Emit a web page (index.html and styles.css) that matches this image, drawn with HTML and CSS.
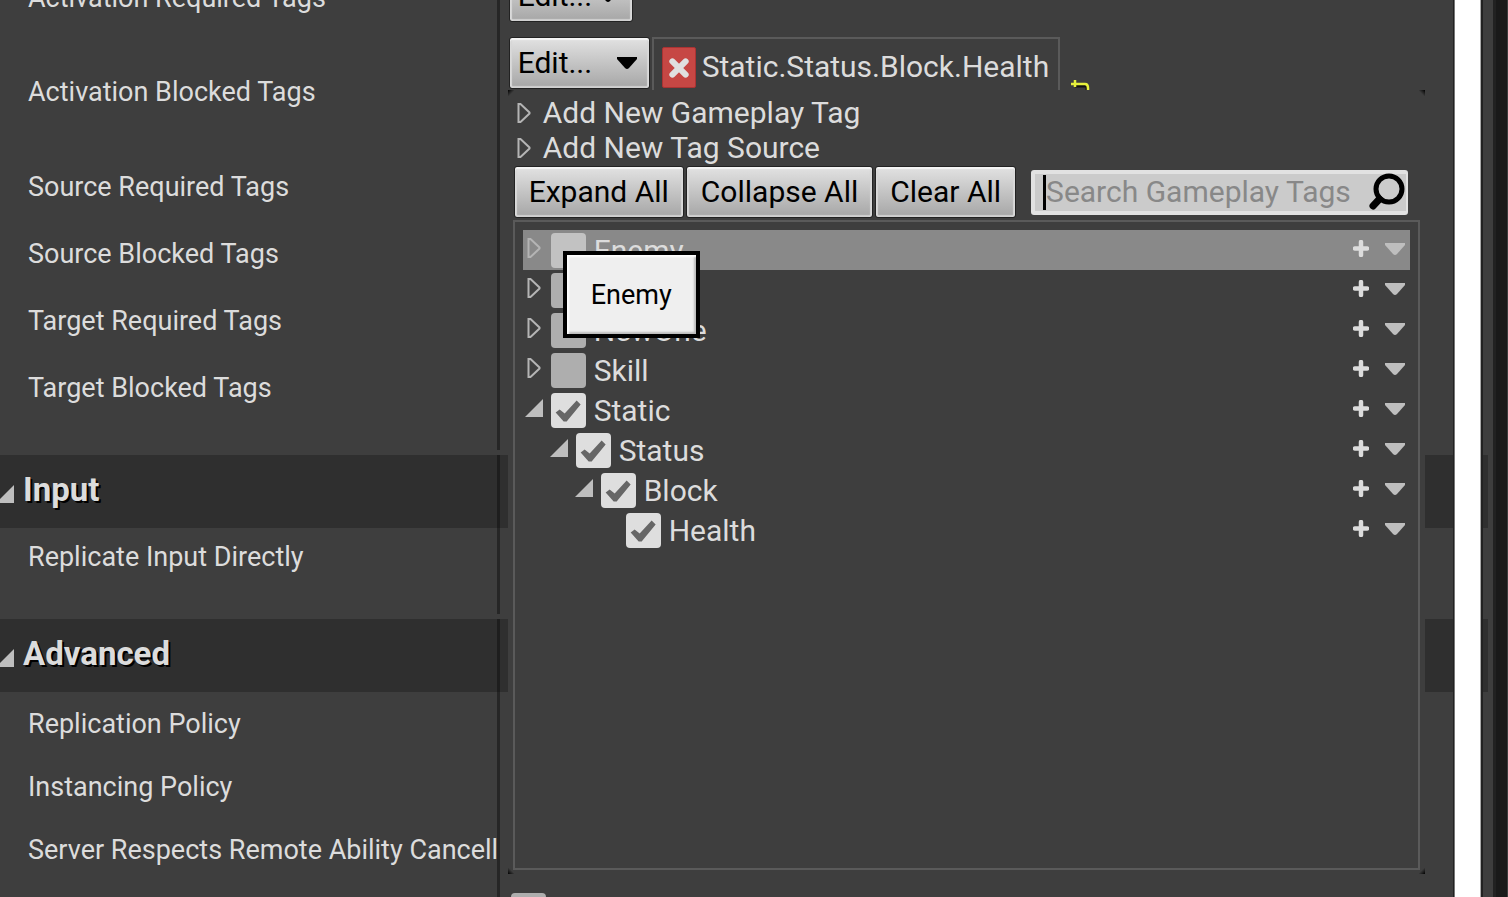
FILE: index.html
```html
<!DOCTYPE html>
<html lang="en">
<head>
<meta charset="utf-8">
<title>Gameplay Ability Details</title>
<link rel="stylesheet" href="styles.css">
</head>
<body>
<svg class="defs" aria-hidden="true">
  <symbol id="collapsed" viewBox="0 0 14 22"><path d="M1.5 2v18h2L12.5 11.5v-1L3.500 2z" fill="none" stroke="#b4b4b4" stroke-width="2"/></symbol>
  <symbol id="expanded" viewBox="0 0 18 18"><path d="M18 0v18H0z" fill="#bebebe"/></symbol>
  <symbol id="caret" viewBox="0 0 20 12"><path d="M0 0h20v2l-8 9q-2 2-4 0L0 2z" fill="currentColor"/></symbol>
  <symbol id="plus" viewBox="0 0 16 17"><path d="M8 2v13M2 8.500h12" fill="none" stroke="#dcdcdc" stroke-width="4.500" stroke-linecap="round"/></symbol>
</svg>
<div class="window">
  <main class="details">
    <section class="group group-tags">
      <div class="row"><span class="label">Activation Required Tags</span><div class="value value-first"><button class="btn edit edit-small">Edit...<svg class="caret"><use href="#caret"/></svg></button></div></div>
      <div class="row row-tall"><span class="label">Activation Blocked Tags</span>
        <div class="value value-tags">
          <button class="btn edit">Edit...<svg class="caret"><use href="#caret"/></svg></button>
          <div class="tagbox">
            <button class="remove" aria-label="Remove"><svg viewBox="0 0 34 41"><path d="M10 14L24 28M24 14L10 28" stroke="#e0e0e0" stroke-width="6.500" stroke-linecap="round"/></svg></button>
            <span>Static.Status.Block.Health</span>
          </div>
          <button class="reset" aria-label="Reset"><svg viewBox="0 0 22 20"><path d="M5 7h12v10" fill="none" stroke="#111" stroke-width="3"/><path d="M1 5h14q3 0 3 4v8M5 1v7" fill="none" stroke="#e6f03c" stroke-width="2.500"/></svg></button>
          <div class="menu">
            <i class="corner tl"></i><i class="corner tr"></i><i class="corner bl"></i><i class="corner br"></i>
            <button class="expander"><svg class="collapsed"><use href="#collapsed"/></svg>Add New Gameplay Tag</button>
            <button class="expander"><svg class="collapsed"><use href="#collapsed"/></svg>Add New Tag Source</button>
            <div class="toolbar">
              <button class="btn">Expand All</button>
              <button class="btn">Collapse All</button>
              <button class="btn">Clear All</button>
              <label class="search">
                <i class="cursor"></i>
                <input type="text" placeholder="Search Gameplay Tags" aria-label="Search Gameplay Tags">
                <svg viewBox="0 0 38 38"><circle cx="21" cy="16" r="13" fill="none" stroke="#000" stroke-width="5"/><path d="M11.500 26L5 33" stroke="#000" stroke-width="7" stroke-linecap="round"/></svg>
              </label>
            </div>
            <div class="tree">
              <div class="node selected"><svg class="collapsed"><use href="#collapsed"/></svg><label><input type="checkbox"><span>Enemy</span></label><button class="add" aria-label="Add"><svg><use href="#plus"/></svg></button><button class="more" aria-label="More"><svg><use href="#caret"/></svg></button></div>
              <div class="node"><svg class="collapsed"><use href="#collapsed"/></svg><label><input type="checkbox"></label><button class="add" aria-label="Add"><svg><use href="#plus"/></svg></button><button class="more" aria-label="More"><svg><use href="#caret"/></svg></button></div>
              <div class="node"><svg class="collapsed"><use href="#collapsed"/></svg><label><input type="checkbox"><span>NewOne</span></label><button class="add" aria-label="Add"><svg><use href="#plus"/></svg></button><button class="more" aria-label="More"><svg><use href="#caret"/></svg></button></div>
              <div class="node"><svg class="collapsed"><use href="#collapsed"/></svg><label><input type="checkbox"><span>Skill</span></label><button class="add" aria-label="Add"><svg><use href="#plus"/></svg></button><button class="more" aria-label="More"><svg><use href="#caret"/></svg></button></div>
              <div class="node"><svg class="expanded"><use href="#expanded"/></svg><label><input type="checkbox" checked><span>Static</span></label><button class="add" aria-label="Add"><svg><use href="#plus"/></svg></button><button class="more" aria-label="More"><svg><use href="#caret"/></svg></button></div>
              <div class="node level-1"><svg class="expanded"><use href="#expanded"/></svg><label><input type="checkbox" checked><span>Status</span></label><button class="add" aria-label="Add"><svg><use href="#plus"/></svg></button><button class="more" aria-label="More"><svg><use href="#caret"/></svg></button></div>
              <div class="node level-2"><svg class="expanded"><use href="#expanded"/></svg><label><input type="checkbox" checked><span>Block</span></label><button class="add" aria-label="Add"><svg><use href="#plus"/></svg></button><button class="more" aria-label="More"><svg><use href="#caret"/></svg></button></div>
              <div class="node level-3"><svg class="expanded"></svg><label><input type="checkbox" checked><span>Health</span></label><button class="add" aria-label="Add"><svg><use href="#plus"/></svg></button><button class="more" aria-label="More"><svg><use href="#caret"/></svg></button></div>
              <div class="tooltip" role="tooltip">Enemy</div>
            </div>
          </div>
        </div>
      </div>
      <div class="row"><span class="label">Source Required Tags</span></div>
      <div class="row"><span class="label">Source Blocked Tags</span></div>
      <div class="row"><span class="label">Target Required Tags</span></div>
      <div class="row"><span class="label">Target Blocked Tags</span></div>
    </section>
    <h2 class="category"><svg class="expanded"><use href="#expanded"/></svg>Input</h2>
    <section class="group">
      <div class="row row-short"><span class="label">Replicate Input Directly</span></div>
    </section>
    <h2 class="category"><svg class="expanded"><use href="#expanded"/></svg>Advanced</h2>
    <section class="group">
      <div class="row row-mid"><span class="label">Replication Policy</span></div>
      <div class="row row-mid"><span class="label">Instancing Policy</span></div>
      <div class="row row-mid"><span class="label">Server Respects Remote Ability Cancellation</span></div>
      <div class="row row-mid"><span class="label"></span><div class="value value-check"><input type="checkbox" aria-label="Option"></div></div>
    </section>
    <div class="scrollbar"></div>
  </main>
  <div class="edge"></div>
</div>
</body>
</html>
```
FILE: styles.css
```css
* { box-sizing: border-box; }
body {
  margin: 0;
  background: #3e3e3e;
  color: #dcdcdc;
  font: 27px/36px Roboto, "Liberation Sans", sans-serif;
}
button, input { font: inherit; color: inherit; margin: 0; padding: 0; border: 0; background: none; }
svg { display: block; flex: none; }
.defs { position: absolute; width: 0; height: 0; }

.window { display: flex; height: 100vh; overflow: hidden; }
.details { position: relative; flex: 1; min-width: 0; overflow: hidden; }
.edge {
  width: 15px;
  background: #1a1a1a;
  border-left: 3px solid #222;
  border-right: 1px solid #3e3e3e;
}
.scrollbar {
  position: absolute;
  top: 0;
  bottom: 0;
  right: 10px;
  width: 30px;
  background: #fff;
  border: solid #222;
  border-width: 0 2px 0 1px;
  box-shadow: inset 1px 0 #777, inset -1px 0 #aaa;
}

/* property rows */
.group, .category {
  background: linear-gradient(#262626, #262626) calc((100% + 2px) / 3) 0 / 3px 100% no-repeat;
}
.group { padding-bottom: 28px; margin-bottom: 5px; }
.group-tags { margin-top: -36px; padding-bottom: 29px; }
.row { display: grid; grid-template-columns: 1fr 2fr; height: 67px; }
.row-tall { height: 122px; }
.row-short { height: 58px; }
.row-mid { height: 63px; }
.label { align-self: center; padding-left: 28px; min-width: 0; overflow: hidden; white-space: nowrap; }
.value { position: relative; padding-left: 11px; font-size: 30px; }
.value-first { padding-top: 6px; }
.value-check { padding-top: 12px; padding-left: 13px; }
.value-tags { display: flex; align-items: flex-start; padding-top: 6px; }

.category {
  display: flex;
  align-items: center;
  gap: 9px;
  height: 73px;
  margin: 0 5px 0 0;
  padding-bottom: 4px;
  background-color: #2f2f2f;
  background-image: linear-gradient(#1e1e1e, #1e1e1e);
  background-position-x: calc((100% + 7px) / 3);
  font-size: 33px;
  font-weight: 700;
  text-shadow: 2px 2px #000;
}
.category svg { margin: 8px 0 0 -4px; }
.expanded { width: 18px; height: 18px; }
.collapsed { width: 14px; height: 22px; }

/* buttons */
.btn {
  height: 52px;
  padding: 0 14px;
  border: 1px solid #222;
  border-radius: 3px;
  background: linear-gradient(#e2e2e2, #a6a6a6);
  box-shadow: inset 0 2px 1px #f4f4f4, inset 2px 0 1px #d8d8d8, inset -2px 0 1px #d8d8d8, inset 0 -2px 1px #d0d0d0;
  color: #000;
  font-size: 30px;
  white-space: nowrap;
}
.edit { display: flex; align-items: center; justify-content: space-between; width: 141px; padding: 0 12px 0 8px; }
.edit-small { width: 124px; padding-right: 14px; }
.caret { width: 20px; height: 12px; }

.tagbox {
  display: flex;
  align-items: center;
  gap: 6px;
  height: 60px;
  margin-left: 2px;
  padding: 0 9px 0 8px;
  border: 2px solid #5a5a5a;
}
.remove { width: 34px; height: 41px; background: #c64744; border: 1px solid #a33; border-radius: 2px; }
.remove svg { width: 32px; height: 39px; }
.reset { margin: 42px 0 0 10px; }
.reset svg { width: 22px; height: 20px; }

/* tag picker */
.menu {
  position: absolute;
  top: 59px;
  left: 10px;
  right: 68px;
  height: 784px;
  display: flex;
  flex-direction: column;
  padding: 5px 5px 4px;
  background: #3e3e3e;
}
.corner { position: absolute; width: 6px; height: 6px; }
.tl { top: 0; left: 0; background: linear-gradient(135deg, #000, transparent 60%); }
.tr { top: 0; right: 0; background: linear-gradient(225deg, #000, transparent 60%); }
.bl { bottom: 0; left: 0; background: linear-gradient(45deg, #000, transparent 60%); }
.br { bottom: 0; right: 0; background: linear-gradient(315deg, #000, transparent 60%); }
.expander { display: flex; align-items: center; gap: 12px; height: 35px; padding-left: 4px; }
.toolbar { display: flex; align-items: center; gap: 2px; margin: 1px 7px 2px 1px; }
.search {
  display: flex;
  align-items: center;
  flex: 1;
  min-width: 0;
  height: 45px;
  margin: 0 5px 0 13px;
  padding-left: 8px;
  border: 4px solid #e2e2e2;
  border-right-width: 2px;
  border-radius: 3px;
  background: #cbcbcb;
  color: #000;
}
.search input { flex: 1; min-width: 0; height: 36px; outline: 0; }
.search input::placeholder { color: #888; opacity: 1; }
.search svg { width: 38px; height: 38px; }
.cursor { width: 3px; height: 35px; background: #000; }

.tree { position: relative; flex: 1; padding: 8px; border: 2px solid #5a5a5a; }
.node { display: flex; align-items: center; height: 40px; padding: 0 4px; }
.node.selected { background: #898989; }
.node > svg { margin-bottom: 4px; }
.node > .collapsed { margin-right: 10px; }
.node > .expanded { margin: 0 8px 4px -2px; }
.level-1 { padding-left: 29px; }
.level-2 { padding-left: 54px; }
.level-3 { padding-left: 79px; }
.node label { display: flex; align-items: center; gap: 8px; flex: 1; }
.node label span { padding-top: 2px; }
input[type=checkbox] {
  appearance: none;
  display: block;
  width: 35px;
  height: 35px;
  border-radius: 4px;
  background: #aeaeae;
}
.selected input[type=checkbox] { background: #c2c2c2; }
input[type=checkbox]:checked { background: #dedede; }
input[type=checkbox]:checked::before {
  content: "";
  display: block;
  width: 35px;
  height: 35px;
  background: #666;
  clip-path: polygon(5px 20px, 9px 17px, 14px 21px, 26px 8px, 30px 12px, 16px 29px, 13px 29px);
}
.add svg { width: 16px; height: 17px; }
.add { margin: 0 16px 3px 0; }
.more { margin: 0 1px 3px 0; color: #bebebe; }
.more svg { width: 20px; height: 12px; }

.tooltip {
  position: absolute;
  top: 29px;
  left: 48px;
  padding: 22px 24px 21px;
  border: 4px solid #000;
  background: #efefef;
  box-shadow: inset 2px 2px 2px #fff, inset -2px -2px 2px #bbb;
  color: #000;
  font-size: 27px;
}
```
